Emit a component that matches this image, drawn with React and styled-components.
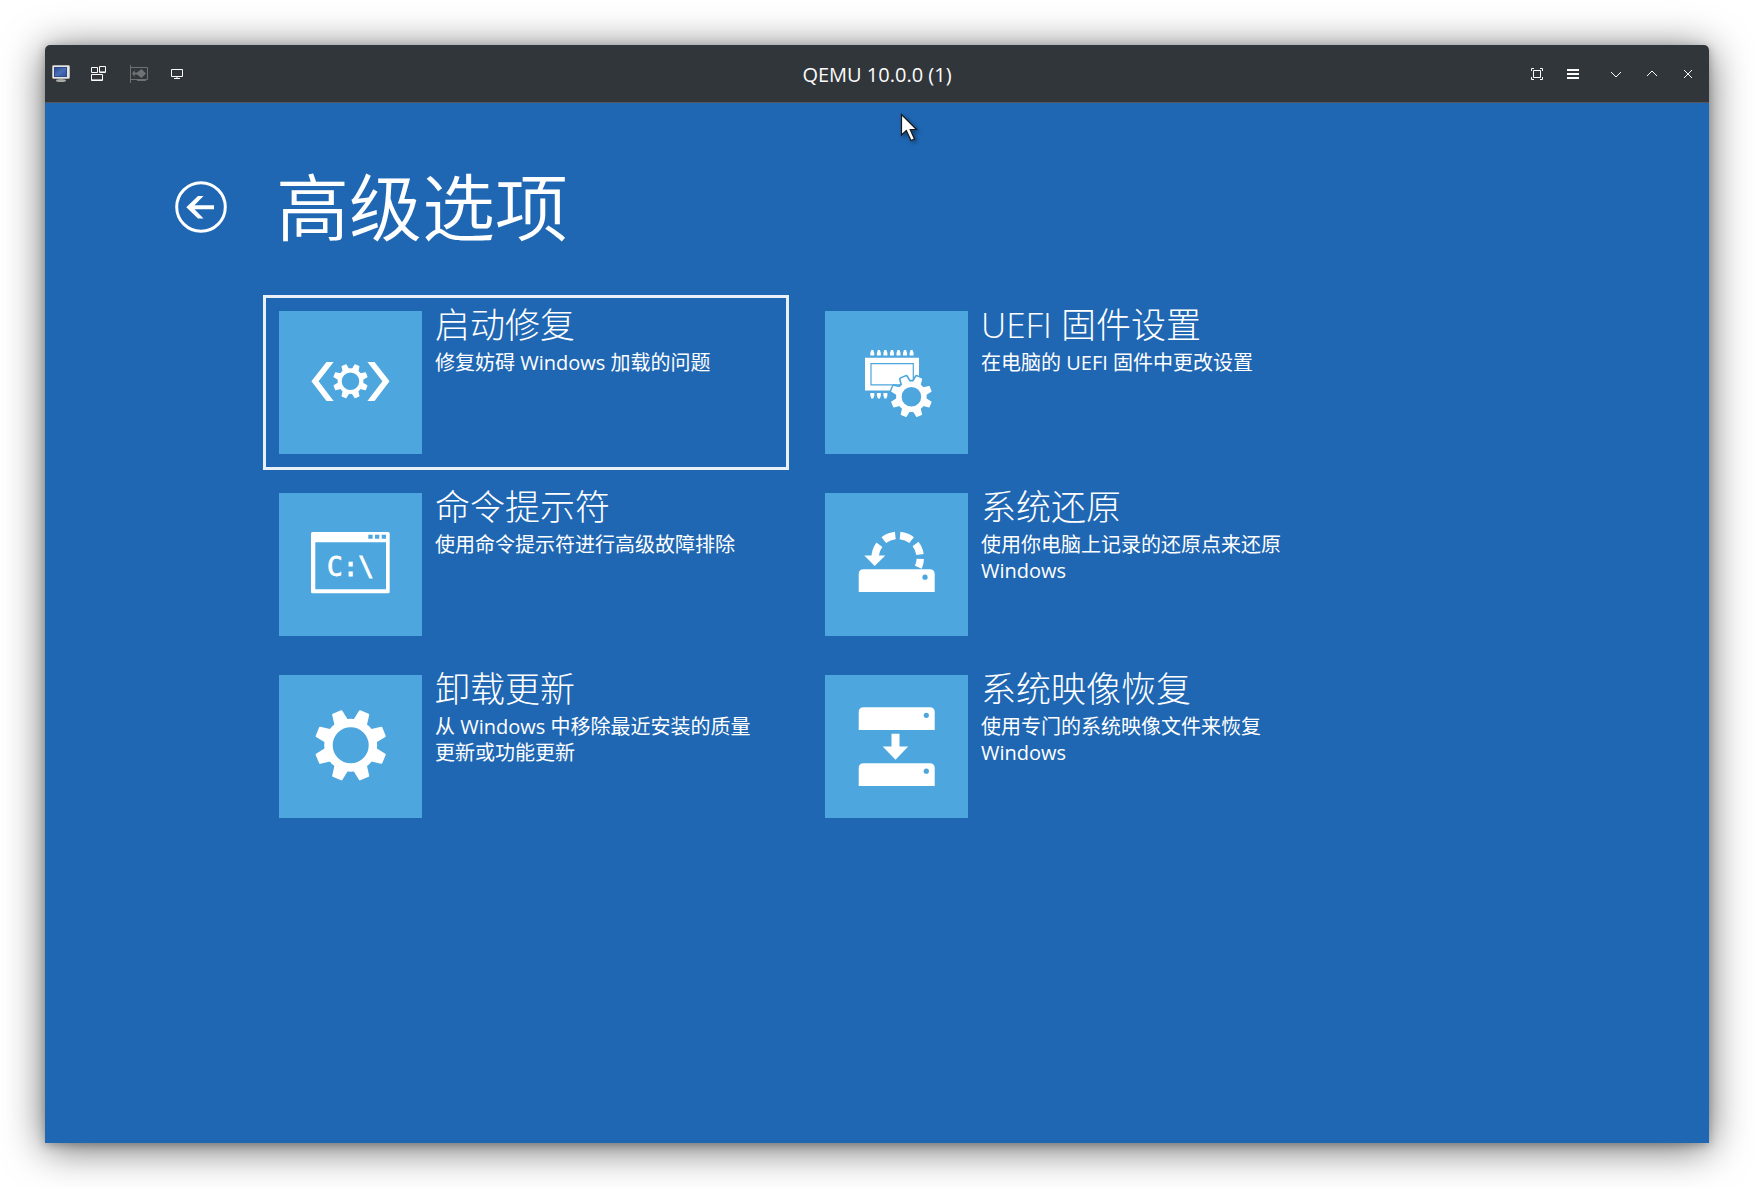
import React from 'react';
import styled, { createGlobalStyle, css } from 'styled-components';

const GlobalStyle = createGlobalStyle`
  * {
    box-sizing: border-box;
  }

  body {
    margin: 0;
    background: #ffffff;
    font-family: 'Open Sans', 'Noto Sans CJK SC', sans-serif;
  }
`;

const Desktop = styled.div`
  display: flex;
  min-height: 100vh;
  padding: 45px;
`;

const Window = styled.section`
  position: relative;
  display: flex;
  flex: 1;
  flex-direction: column;
  border-radius: 5px 5px 0 0;
  box-shadow: 0 5px 40px rgba(0, 0, 0, 0.6), 0 2px 10px rgba(0, 0, 0, 0.25);
`;

const TitleBar = styled.header`
  display: grid;
  grid-template-columns: 1fr auto 1fr;
  align-items: center;
  height: 58px;
  padding: 0 7px;
  border-bottom: 1px solid #53575b;
  border-radius: 5px 5px 0 0;
  background: #31363b;
  color: #fcfcfc;
`;

const WindowTitle = styled.h1`
  margin: 0;
  padding-top: 2px;
  font-size: 20px;
  font-weight: 400;
  line-height: 28px;
`;

const BarGroup = styled.div`
  display: flex;
  align-items: center;
  gap: 21px;
`;

const BarActions = styled(BarGroup)`
  justify-content: flex-end;
  gap: 25px;
  padding-right: 5px;
`;

const BarCluster = styled(BarGroup)`
  gap: 18px;
`;

const BarButton = styled.button`
  display: flex;
  padding: 0;
  border: 0;
  background: none;
  color: inherit;

  &:disabled {
    color: #6e7275;
  }
`;

const Screen = styled.main`
  flex: 1;
  padding: 60px 64px 60px 130px;
  background: #1f67b3;
  color: #ffffff;
`;

const ScreenHeader = styled.div`
  display: flex;
  align-items: center;
  gap: 49px;
  margin-bottom: 44px;
`;

const BackButton = styled.button`
  display: flex;
  padding: 0;
  border: 0;
  background: none;
  color: inherit;
`;

const ScreenTitle = styled.h2`
  margin: 0;
  font-size: 73px;
  font-weight: 350;
  line-height: 88px;
`;

const OptionGrid = styled.div`
  display: grid;
  grid-template-columns: repeat(2, minmax(0, 526px));
  gap: 7px 20px;
  padding-left: 88px;
`;

const OptionCard = styled.button`
  display: flex;
  gap: 13px;
  min-height: 175px;
  padding: 0 13px;
  border: 3px solid transparent;
  background: none;
  color: inherit;
  font-family: inherit;
  text-align: left;

  ${props =>
    props.$selected &&
    css`
      border-color: #e9f0f8;
    `}
`;

const Tile = styled.span`
  flex: none;
  width: 143px;
  height: 143px;
  margin: 13px 0;
  background: #4da6dd;

  & svg {
    display: block;
  }
`;

const OptionText = styled.span`
  flex: 1;
  align-self: flex-start;
  padding: 1px 16px 0 0;
`;

const OptionTitle = styled.span`
  display: block;
  font-size: 35px;
  font-weight: 300;
  line-height: 51px;
`;

const OptionNote = styled.span`
  display: block;
  font-size: 20px;
  line-height: 26px;
`;

const Pointer = styled.svg`
  position: absolute;
  top: 68px;
  left: calc(50% + 23px);
  filter: drop-shadow(2px 2px 2px rgba(0, 0, 0, 0.4));
  pointer-events: none;
`;

const TILE_BLUE = '#4da6dd';

const TEETH = [22.5, 67.5, 112.5, 157.5, 202.5, 247.5, 292.5, 337.5];

// eight-toothed cog, drawn around 0,0 with an outer radius of 35
const Gear = ({ x, y, radius, hole = 18, outline = 0 }) => (
  <g transform={`translate(${x} ${y}) scale(${radius / 35})`}>
    {outline > 0 && (
      <g fill={TILE_BLUE} stroke={TILE_BLUE} strokeWidth={outline} strokeLinejoin="round">
        <circle r="26" />
        {TEETH.map(angle => (
          <path key={angle} d="M-7-22L-5-35H5L7-22Z" transform={`rotate(${angle})`} />
        ))}
      </g>
    )}
    <circle r={(26.5 + hole) / 2} fill="none" stroke="#fff" strokeWidth={26.5 - hole} />
    {TEETH.map(angle => (
      <path
        key={angle}
        d="M-6.500-23L-4.500-35H4.500L6.500-23Z"
        fill="#fff"
        stroke="#fff"
        strokeWidth="2"
        strokeLinejoin="round"
        transform={`rotate(${angle})`}
      />
    ))}
  </g>
);

const Drive = ({ y, dotX = 101.3 }) => (
  <g>
    <path d={`M33.700 ${y + 22.7}V${y + 5}q0-5 5-5H104.700q5 0 5 5V${y + 22.7}Z`} fill="#fff" />
    <circle cx={dotX} cy={y + 8} r="2.600" fill={TILE_BLUE} />
  </g>
);

const TileSvg = ({ children }) => (
  <svg width="143" height="143" viewBox="0 0 143 143" aria-hidden="true">
    {children}
  </svg>
);

const RepairIcon = () => (
  <TileSvg>
    <path d="M47.500 51H54.600L39.600 70.300L54.600 90H47.500L32.400 70.300Z" fill="#fff" />
    <path d="M95.500 51H88.400L103.400 70.300L88.400 90H95.500L110.600 70.300Z" fill="#fff" />
    <Gear x={71.5} y={70.2} radius={17} hole={18} />
  </TileSvg>
);

const FirmwareIcon = () => (
  <TileSvg>
    <g fill="#fff">
      {[0, 1, 2, 3, 4, 5, 6].map(i => (
        <path key={i} d={`M${46.3 + i * 6.55} 39h2l1 3v2.500h-4v-2.500Z`} />
      ))}
      {[0, 1, 2].map(i => (
        <path key={i} d={`M${45.3 + i * 6.55} 82h4v2.500l-1 3h-2l-1-3Z`} />
      ))}
      <path d="M40 46.700H94V79.500H40Z" />
    </g>
    <path d="M46 52.600H88.300V73.800H46Z" fill="none" stroke={TILE_BLUE} strokeWidth="1.200" />
    <Gear x={86.4} y={85.7} radius={20.2} hole={17} outline={7} />
  </TileSvg>
);

const PromptIcon = () => (
  <TileSvg>
    <path
      d="M33.500 39H109.200q1.500 0 1.500 1.500V98.800q0 1.500-1.500 1.500H33.500q-1.500 0-1.500-1.500V40.500q0-1.500 1.500-1.500ZM36.300 49.200V96.300H107V49.200Z"
      fill="#fff"
      fillRule="evenodd"
    />
    <path d="M89.300 41.700h4.300v4h-4.300ZM96 41.700h4.300v4H96ZM102.700 41.700h4.300v4h-4.300Z" fill={TILE_BLUE} />
    <text
      x="48"
      y="83"
      fill="#fff"
      stroke="#fff"
      strokeWidth="0.800"
      fontFamily="'DejaVu Sans Mono', monospace"
      fontSize="26"
    >
      C:\
    </text>
  </TileSvg>
);

const RESTORE_ARCS = [
  [24, 2],
  [-9, -38],
  [-52, -84],
  [-96, -128],
  [-144, -180],
];

const arcPath = ([from, to]) => {
  const point = deg => {
    const rad = (deg * Math.PI) / 180;
    return `${(72.7 + 22.6 * Math.cos(rad)).toFixed(2)} ${(65 + 22.6 * Math.sin(rad)).toFixed(2)}`;
  };
  return `M${point(from)}A22.600 22.600 0 0 0 ${point(to)}`;
};

const RestoreIcon = () => (
  <TileSvg>
    {RESTORE_ARCS.map(arc => (
      <path key={arc[0]} d={arcPath(arc)} fill="none" stroke="#fff" strokeWidth="7.400" />
    ))}
    <path d="M39.300 62.500H60.300L49.700 73Z" fill="#fff" />
    <Drive y={76.2} dotX={100} />
  </TileSvg>
);

const UpdatesIcon = () => (
  <TileSvg>
    <Gear x={71.7} y={70.3} radius={35} />
  </TileSvg>
);

const ImageIcon = () => (
  <TileSvg>
    <Drive y={32.3} />
    <path d="M66.500 58.700H74.500V71.500H83.200L70.500 84.700L57.700 71.500H66.500Z" fill="#fff" />
    <Drive y={88.2} />
  </TileSvg>
);

const options = [
  { title: '启动修复', note: '修复妨碍 Windows 加载的问题', Icon: RepairIcon, selected: true },
  { title: 'UEFI 固件设置', note: '在电脑的 UEFI 固件中更改设置', Icon: FirmwareIcon },
  { title: '命令提示符', note: '使用命令提示符进行高级故障排除', Icon: PromptIcon },
  { title: '系统还原', note: '使用你电脑上记录的还原点来还原 Windows', Icon: RestoreIcon },
  { title: '卸载更新', note: '从 Windows 中移除最近安装的质量更新或功能更新', Icon: UpdatesIcon },
  { title: '系统映像恢复', note: '使用专门的系统映像文件来恢复 Windows', Icon: ImageIcon },
];

const BarIcon = ({ children }) => (
  <svg width="18" height="18" viewBox="0 0 18 18" fill="none" stroke="currentColor" aria-hidden="true">
    {children}
  </svg>
);

const ComputerIcon = () => (
  <BarIcon>
    <defs>
      <linearGradient id="glass" x1="0" y1="0" x2="1" y2="1">
        <stop offset="0" stopColor="#27458c" />
        <stop offset="0.500" stopColor="#4a6fb5" />
        <stop offset="1" stopColor="#2b4f9c" />
      </linearGradient>
    </defs>
    <ellipse cx="9" cy="15.500" rx="5" ry="1.500" fill="#a9aaa8" stroke="none" />
    <rect x="0.500" y="0.500" width="17" height="13" rx="1" fill="#e4e4e0" stroke="#b4b5b2" />
    <rect x="2.500" y="2.500" width="12" height="9" fill="url(#glass)" stroke="#2d4a8c" />
  </BarIcon>
);

const ViewsIcon = () => (
  <BarIcon>
    <path d="M0.500 2.500h6v5h-6ZM8.500 1.500h6v6h-6ZM0.500 9.500h11v6h-11Z" />
    <path d="M1 14.500h10M9 6.500h5" strokeOpacity="0.600" />
  </BarIcon>
);

const CardIcon = () => (
  <BarIcon>
    <path d="M0.500 0V18M0 2.500H17.500V14.500H1M7 15.500h9" />
    <path d="M2 8.500L4.500 5V7.500H7L11.500 4L16 8.500L11.500 13L7 9.500H4.500V12Z" fill="currentColor" stroke="none" />
  </BarIcon>
);

const DisplayIcon = () => (
  <BarIcon>
    <path d="M2.500 4.500h11v7h-11ZM8 12v2M5 13.500h6" />
  </BarIcon>
);

const FullscreenIcon = () => (
  <BarIcon>
    <path d="M5.500 5.500h7v7h-7Z" />
    <path d="M3.500 6V3.500H6M12 3.500h2.500V6M14.500 12v2.500H12M6 14.500H3.500V12" />
  </BarIcon>
);

const MenuIcon = () => (
  <BarIcon>
    <path d="M3 5h12M3 9h12M3 13h12" strokeWidth="2" />
  </BarIcon>
);

const MinimizeIcon = () => (
  <BarIcon>
    <path d="M4 7l5 5l5-5" />
  </BarIcon>
);

const MaximizeIcon = () => (
  <BarIcon>
    <path d="M4 11l5-5l5 5" />
  </BarIcon>
);

const CloseIcon = () => (
  <BarIcon>
    <path d="M5 5l8 8M13 5l-8 8" />
  </BarIcon>
);

const App = () => {
  return (
    <>
      <GlobalStyle />
      <Desktop>
        <Window>
          <TitleBar>
            <BarGroup>
              <ComputerIcon />
              <BarButton aria-label="Views">
                <ViewsIcon />
              </BarButton>
              <BarButton aria-label="Devices" disabled>
                <CardIcon />
              </BarButton>
              <BarButton aria-label="Display">
                <DisplayIcon />
              </BarButton>
            </BarGroup>
            <WindowTitle>QEMU 10.0.0 (1)</WindowTitle>
            <BarActions>
              <BarCluster>
                <BarButton aria-label="Full screen">
                  <FullscreenIcon />
                </BarButton>
                <BarButton aria-label="Menu">
                  <MenuIcon />
                </BarButton>
              </BarCluster>
              <BarCluster>
                <BarButton aria-label="Minimize">
                  <MinimizeIcon />
                </BarButton>
                <BarButton aria-label="Maximize">
                  <MaximizeIcon />
                </BarButton>
                <BarButton aria-label="Close">
                  <CloseIcon />
                </BarButton>
              </BarCluster>
            </BarActions>
          </TitleBar>
          <Screen>
            <ScreenHeader>
              <BackButton aria-label="返回">
                <svg width="52" height="52" viewBox="0 0 52 52" aria-hidden="true">
                  <circle cx="26" cy="26" r="24.300" fill="none" stroke="#fff" strokeWidth="3" />
                  <path d="M11.300 26.300L23 15H28.500L19.500 24.300H39V28.300H19.500L28.500 37.500H23Z" fill="#fff" />
                </svg>
              </BackButton>
              <ScreenTitle>高级选项</ScreenTitle>
            </ScreenHeader>
            <OptionGrid>
              {options.map(({ title, note, Icon, selected }) => (
                <OptionCard key={title} type="button" $selected={selected}>
                  <Tile>
                    <Icon />
                  </Tile>
                  <OptionText>
                    <OptionTitle>{title}</OptionTitle>
                    <OptionNote>{note}</OptionNote>
                  </OptionText>
                </OptionCard>
              ))}
            </OptionGrid>
          </Screen>
          <Pointer width="20" height="30" viewBox="0 0 20 30" aria-hidden="true">
            <path
              d="M1.500 1.500V22L6.300 17.500L11 27.500L14.500 26L10.200 16.500H16.500Z"
              fill="#fff"
              stroke="#17191b"
              strokeWidth="1.200"
            />
          </Pointer>
        </Window>
      </Desktop>
    </>
  );
};

export default App;
